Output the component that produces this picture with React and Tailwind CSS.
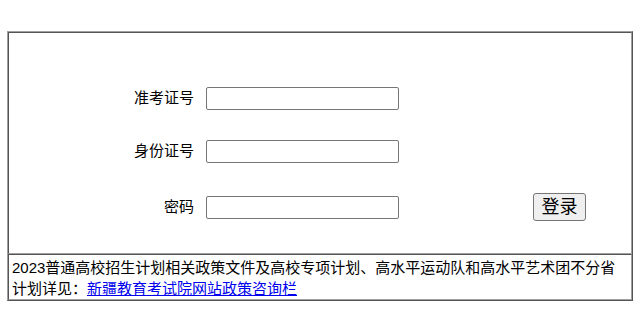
import React from "react";

const font = { fontFamily: '"Liberation Sans", "Noto Sans CJK SC", sans-serif' };

// one form row: label + text box (+ optional button)
const Row = ({ label, type = "text", className = "", children }) => (
  <div className={`flex items-center ${className}`}>
    <div className="w-[185px] text-right text-[15px] text-black">{label}</div>
    <input
      type={type}
      className="ml-[12px] w-[193px] h-[23px] border border-[#767676] rounded-[2px] bg-white outline-none px-1"
    />
    {children}
  </div>
);

export default function App() {
  return (
    <div className="bg-white w-[642px] h-[324px] pl-[7px] pt-[31px]" style={font}>
      <div className="w-[626px] border border-t-[#a0a0a0] border-l-[#a0a0a0] border-b-[#555] border-r-[#555]">
        {/* login form cell */}
        <div className="h-[222px] border border-t-[#555] border-l-[#555] border-b-[#a0a0a0] border-r-[#a0a0a0] flex flex-col">
          <Row label="准考证号" className="mt-[53px] h-[24px]" />
          <Row label="身份证号" className="mt-[29px] h-[24px]" />
          <Row label="密码" type="password" className="mt-[30px] h-[28px]">
            <button className="ml-[134px] w-[53px] h-[28px] border border-[#767676] rounded-[3px] bg-[#efefef] text-[18px] leading-none text-black">
              登录
            </button>
          </Row>
        </div>
        {/* notice cell */}
        <div className="border border-t-[#555] border-l-[#555] border-b-[#a0a0a0] border-r-[#a0a0a0] pl-[3px] pr-[2px] pt-[2px] text-[15px] leading-[21px] text-black">
          2023普通高校招生计划相关政策文件及高校专项计划、高水平运动队和高水平艺术团不分省计划详见：
          <a href="#" className="text-[#0000ee] underline">新疆教育考试院网站政策咨询栏</a>
        </div>
      </div>
    </div>
  );
}
